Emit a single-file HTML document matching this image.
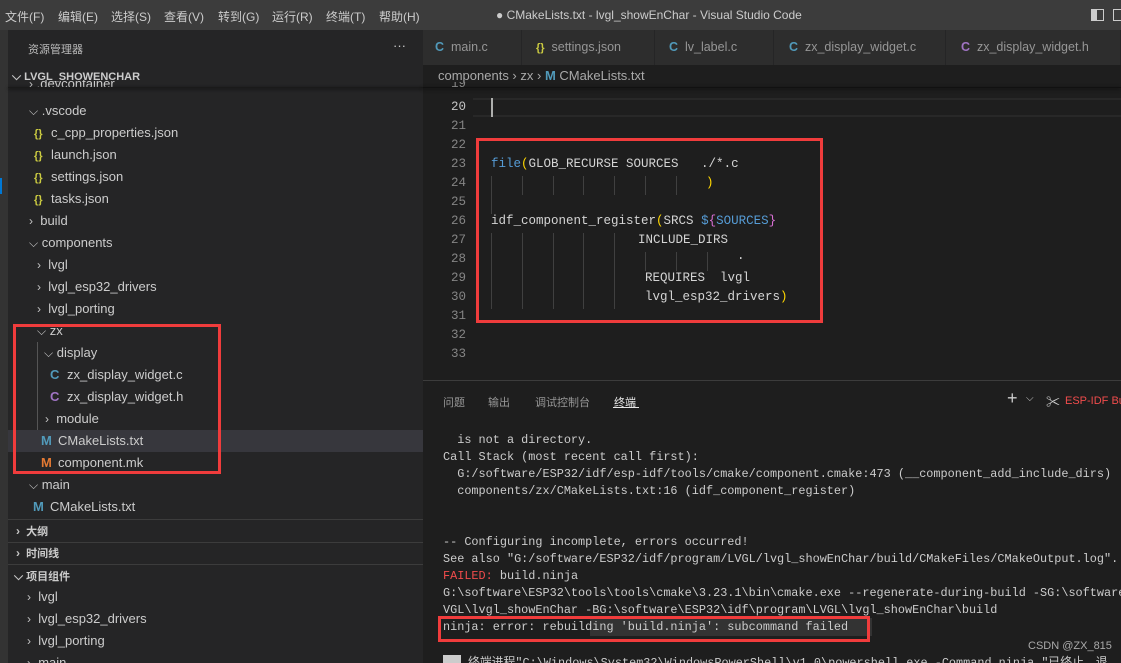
<!DOCTYPE html>
<html><head><meta charset="utf-8"><style>
*{margin:0;padding:0;box-sizing:border-box}
html,body{width:1121px;height:663px;overflow:hidden}
body{background:#1e1e1e;font-family:"Liberation Sans","Noto Sans CJK SC",sans-serif;color:#ccc;position:relative}
.a{position:absolute;white-space:pre}
#title{left:0;top:0;width:1121px;height:30px;background:#3c3c3c}
.menu{top:8px;font-size:12px;color:#ccc}
#act{left:0;top:30px;width:8px;height:633px;background:#333}
#side{left:8px;top:30px;width:415px;height:633px;background:#252526}
.row{font-size:13px;color:#ccc;height:22px;line-height:22px}
.chev{color:#c5c5c5;font-size:12px}
.ic{display:inline-block;width:17px;font-weight:bold}
.j{color:#cbcb41;font-size:11px}
#tabs{left:423px;top:30px;width:698px;height:35px;background:#252526}
.tab{top:30px;height:35px;background:#2d2d2d;border-right:1px solid #252526;font-size:12.5px;line-height:35px;color:#969696}
.code{font-family:"Liberation Mono",monospace;font-size:12.5px;color:#d4d4d4}
.ln{font-family:"Liberation Mono",monospace;font-size:12.5px;color:#858585;text-align:right;width:30px}
.term{font-family:"Liberation Mono",monospace;font-size:11.85px;color:#ccc;left:443px}
.red{border:3px solid #f03c3c}
.guide{width:1px;background:#404040}
</style></head><body>
<div class="a" id="title"></div>
<div class="a menu" style="left:5px">文件(F)</div>
<div class="a menu" style="left:58px">编辑(E)</div>
<div class="a menu" style="left:111px">选择(S)</div>
<div class="a menu" style="left:164px">查看(V)</div>
<div class="a menu" style="left:218px">转到(G)</div>
<div class="a menu" style="left:272px">运行(R)</div>
<div class="a menu" style="left:326px">终端(T)</div>
<div class="a menu" style="left:379px">帮助(H)</div>
<div class="a menu" style="left:496px">● CMakeLists.txt - lvgl_showEnChar - Visual Studio Code</div>
<div class="a" style="left:1091px;top:9px;width:13px;height:12px;border:1.5px solid #ccc;border-left-width:6px"></div>
<div class="a" style="left:1113px;top:9px;width:10px;height:12px;border:1.5px solid #ccc"></div>
<div class="a" id="act"></div>
<div class="a" style="left:0;top:178px;width:2px;height:16px;background:#0078d4"></div>
<div class="a" id="side"></div>
<div class="a" style="left:28px;top:41px;font-size:11px;color:#bbb">资源管理器</div>
<div class="a" style="left:393px;top:38px;font-size:13px;color:#ccc">···</div>
<div class="a row" style="left:12px;top:65px;font-size:11px;font-weight:bold"><span class="chev">⌵</span> LVGL_SHOWENCHAR</div>
<div class="a row" style="left:29px;top:80px;height:10px;overflow:hidden;line-height:8px"><span class="chev">›</span> .devcontainer</div>
<div class="a" style="left:8px;top:87px;width:415px;height:1px;background:#1a1a1a;box-shadow:0 1px 3px #000"></div>
<div class="a row" style="left:29px;top:100px"><span class="chev">⌵</span> .vscode</div>
<div class="a row" style="left:34px;top:122px"><span class="ic j">{}</span>c_cpp_properties.json</div>
<div class="a row" style="left:34px;top:144px"><span class="ic j">{}</span>launch.json</div>
<div class="a row" style="left:34px;top:166px"><span class="ic j">{}</span>settings.json</div>
<div class="a row" style="left:34px;top:188px"><span class="ic j">{}</span>tasks.json</div>
<div class="a row" style="left:29px;top:210px"><span class="chev">›</span>&nbsp; build</div>
<div class="a row" style="left:29px;top:232px"><span class="chev">⌵</span> components</div>
<div class="a row" style="left:37px;top:254px"><span class="chev">›</span>&nbsp; lvgl</div>
<div class="a row" style="left:37px;top:276px"><span class="chev">›</span>&nbsp; lvgl_esp32_drivers</div>
<div class="a row" style="left:37px;top:298px"><span class="chev">›</span>&nbsp; lvgl_porting</div>
<div class="a row" style="left:37px;top:320px"><span class="chev">⌵</span> zx</div>
<div class="a" style="left:37px;top:342px;width:1px;height:110px;background:#555"></div>
<div class="a row" style="left:44px;top:342px"><span class="chev">⌵</span> display</div>
<div class="a row" style="left:50px;top:364px"><span class="ic" style="color:#519aba">C</span>zx_display_widget.c</div>
<div class="a row" style="left:50px;top:386px"><span class="ic" style="color:#a074c4">C</span>zx_display_widget.h</div>
<div class="a row" style="left:45px;top:408px"><span class="chev">›</span>&nbsp; module</div>
<div class="a" style="left:8px;top:430px;width:415px;height:22px;background:#37373d"></div>
<div class="a row" style="left:41px;top:430px"><span class="ic" style="color:#519aba">M</span>CMakeLists.txt</div>
<div class="a row" style="left:41px;top:452px"><span class="ic" style="color:#e37933">M</span>component.mk</div>
<div class="a red" style="left:13px;top:324px;width:208px;height:150px"></div>
<div class="a row" style="left:29px;top:474px"><span class="chev">⌵</span> main</div>
<div class="a row" style="left:33px;top:496px"><span class="ic" style="color:#519aba">M</span>CMakeLists.txt</div>
<div class="a" style="left:8px;top:519px;width:415px;height:1px;background:#3c3c3c"></div>
<div class="a row" style="left:16px;top:520px;font-size:11px;font-weight:bold"><span class="chev">›</span>&nbsp; 大纲</div>
<div class="a" style="left:8px;top:542px;width:415px;height:1px;background:#3c3c3c"></div>
<div class="a row" style="left:16px;top:542px;font-size:11px;font-weight:bold"><span class="chev">›</span>&nbsp; 时间线</div>
<div class="a" style="left:8px;top:564px;width:415px;height:1px;background:#3c3c3c"></div>
<div class="a row" style="left:14px;top:565px;font-size:11px;font-weight:bold"><span class="chev">⌵</span> 项目组件</div>
<div class="a row" style="left:27px;top:586px"><span class="chev">›</span>&nbsp; lvgl</div>
<div class="a row" style="left:27px;top:608px"><span class="chev">›</span>&nbsp; lvgl_esp32_drivers</div>
<div class="a row" style="left:27px;top:630px"><span class="chev">›</span>&nbsp; lvgl_porting</div>
<div class="a row" style="left:27px;top:652px"><span class="chev">›</span>&nbsp; main</div>

<div class="a" id="tabs"></div>
<div class="a tab" style="left:423px;width:99px;padding-left:12px"><b style="color:#519aba">C</b>&nbsp; main.c</div>
<div class="a tab" style="left:522px;width:133px;padding-left:14px"><b style="color:#cbcb41;font-size:11px">{}</b>&nbsp; settings.json</div>
<div class="a tab" style="left:655px;width:119px;padding-left:14px"><b style="color:#519aba">C</b>&nbsp; lv_label.c</div>
<div class="a tab" style="left:774px;width:172px;padding-left:15px"><b style="color:#519aba">C</b>&nbsp; zx_display_widget.c</div>
<div class="a tab" style="left:946px;width:175px;padding-left:15px"><b style="color:#a074c4">C</b>&nbsp; zx_display_widget.h</div>
<div class="a" style="left:438px;top:68px;font-size:13px;color:#a9a9a9">components › zx › <b style="color:#519aba">M</b> CMakeLists.txt</div>
<div class="a" style="left:423px;top:87px;width:698px;height:1px;background:#111;box-shadow:0 1px 4px #000"></div>

<div class="a ln" style="left:436px;top:82px;height:8px;overflow:hidden;line-height:4px">19</div>
<div class="a" style="left:473px;top:98px;width:648px;height:19px;border-top:2px solid #282828;border-bottom:2px solid #282828"></div>
<div class="a" style="left:491px;top:98px;width:2px;height:19px;background:#aeafad"></div>
<div class="a ln" style="left:436px;top:100px;color:#c6c6c6">20</div>
<div class="a ln" style="left:436px;top:119px">21</div>
<div class="a ln" style="left:436px;top:138px">22</div>
<div class="a ln" style="left:436px;top:157px">23</div>
<div class="a ln" style="left:436px;top:176px">24</div>
<div class="a ln" style="left:436px;top:195px">25</div>
<div class="a ln" style="left:436px;top:214px">26</div>
<div class="a ln" style="left:436px;top:233px">27</div>
<div class="a ln" style="left:436px;top:252px">28</div>
<div class="a ln" style="left:436px;top:271px">29</div>
<div class="a ln" style="left:436px;top:290px">30</div>
<div class="a ln" style="left:436px;top:309px">31</div>
<div class="a ln" style="left:436px;top:328px">32</div>
<div class="a ln" style="left:436px;top:347px">33</div>
<div class="a code" style="left:491px;top:157px"><span style="color:#569cd6">file</span><span style="color:#ffd700">(</span>GLOB_RECURSE SOURCES   ./*.c</div>
<div class="a code" style="left:706px;top:176px;color:#ffd700">)</div>
<div class="a code" style="left:491px;top:214px">idf_component_register<span style="color:#ffd700">(</span>SRCS <span style="color:#569cd6">$</span><span style="color:#da70d6">{</span><span style="color:#569cd6">SOURCES</span><span style="color:#da70d6">}</span></div>
<div class="a code" style="left:638px;top:233px">INCLUDE_DIRS</div>
<div class="a code" style="left:737px;top:249px">.</div>
<div class="a code" style="left:645px;top:271px">REQUIRES  lvgl</div>
<div class="a code" style="left:645px;top:290px">lvgl_esp32_drivers<span style="color:#ffd700">)</span></div>
<div class="a guide" style="left:491px;top:176px;height:38px"></div>
<div class="a guide" style="left:491px;top:233px;height:76px"></div>
<div class="a guide" style="left:522px;top:176px;height:19px"></div><div class="a guide" style="left:553px;top:176px;height:19px"></div><div class="a guide" style="left:583px;top:176px;height:19px"></div><div class="a guide" style="left:614px;top:176px;height:19px"></div><div class="a guide" style="left:645px;top:176px;height:19px"></div><div class="a guide" style="left:676px;top:176px;height:19px"></div>
<div class="a guide" style="left:522px;top:233px;height:76px"></div><div class="a guide" style="left:553px;top:233px;height:76px"></div><div class="a guide" style="left:583px;top:233px;height:76px"></div><div class="a guide" style="left:614px;top:233px;height:76px"></div>
<div class="a guide" style="left:645px;top:252px;height:19px"></div><div class="a guide" style="left:676px;top:252px;height:19px"></div><div class="a guide" style="left:707px;top:252px;height:19px"></div>
<div class="a red" style="left:476px;top:138px;width:347px;height:185px"></div>

<div class="a" style="left:423px;top:380px;width:698px;height:1px;background:#3c3c3c"></div>
<div class="a" style="left:443px;top:394px;font-size:11px;color:#969696">问题</div>
<div class="a" style="left:488px;top:394px;font-size:11px;color:#969696">输出</div>
<div class="a" style="left:535px;top:394px;font-size:11px;color:#969696">调试控制台</div>
<div class="a" style="left:614px;top:394px;font-size:11px;color:#e7e7e7">终端</div>
<div class="a" style="left:613px;top:407px;width:26px;height:1px;background:#e7e7e7"></div>
<div class="a" style="left:1007px;top:388px;font-size:18px;color:#ccc">+</div>
<div class="a" style="left:1026px;top:393px;font-size:10px;color:#ccc">⌵</div>
<div class="a" style="left:1046px;top:392px;font-size:14px;color:#ccc">✂</div>
<div class="a" style="left:1065px;top:395px;font-size:11px;color:#f14c4c">ESP-IDF Bui</div>
<div class="a term" style="top:433px">  is not a directory.</div>
<div class="a term" style="top:450px">Call Stack (most recent call first):</div>
<div class="a term" style="top:467px">  G:/software/ESP32/idf/esp-idf/tools/cmake/component.cmake:473 (__component_add_include_dirs)</div>
<div class="a term" style="top:484px">  components/zx/CMakeLists.txt:16 (idf_component_register)</div>
<div class="a term" style="top:535px">-- Configuring incomplete, errors occurred!</div>
<div class="a term" style="top:552px">See also "G:/software/ESP32/idf/program/LVGL/lvgl_showEnChar/build/CMakeFiles/CMakeOutput.log".</div>
<div class="a term" style="top:569px"><span style="color:#f14c4c">FAILED:</span> build.ninja</div>
<div class="a term" style="top:586px">G:\software\ESP32\tools\tools\cmake\3.23.1\bin\cmake.exe --regenerate-during-build -SG:\software\</div>
<div class="a term" style="top:603px;height:13px;overflow:hidden">VGL\lvgl_showEnChar -BG:\software\ESP32\idf\program\LVGL\lvgl_showEnChar\build</div>
<div class="a" style="left:590px;top:618px;width:282px;height:18px;background:#333"></div>
<div class="a term" style="top:620px">ninja: error: rebuilding 'build.ninja': subcommand failed</div>
<div class="a red" style="left:438px;top:616px;width:432px;height:26px"></div>
<div class="a" style="left:1028px;top:640px;font-size:11px;color:#aaa">CSDN @ZX_815</div>
<div class="a" style="left:443px;top:655px;width:18px;height:10px;background:#ccc"></div>
<div class="a term" style="top:653px;left:468px">终端进程"C:\Windows\System32\WindowsPowerShell\v1.0\powershell.exe -Command ninja "已终止。退</div>
</body></html>
